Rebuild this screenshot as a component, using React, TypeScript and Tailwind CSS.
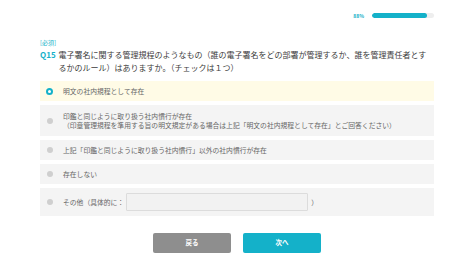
import React, { useState } from 'react';

const font = { fontFamily: '"Noto Sans CJK JP", "Noto Sans", sans-serif' };

type Option = { id: number; lines: string[]; other?: boolean };

const options: Option[] = [
  { id: 1, lines: ['明文の社内規程として存在'] },
  {
    id: 2,
    lines: [
      '印鑑と同じように取り扱う社内慣行が存在',
      '（印章管理規程を準用する旨の明文規定がある場合は上記「明文の社内規程として存在」とご回答ください）',
    ],
  },
  { id: 3, lines: ['上記「印鑑と同じように取り扱う社内慣行」以外の社内慣行が存在'] },
  { id: 4, lines: ['存在しない'] },
  { id: 5, lines: ['その他（具体的に：'], other: true },
];

function Radio({ checked }: { checked: boolean }) {
  if (checked) {
    return <span className="w-[7px] h-[7px] rounded-full border-[2px] border-[#14b1c9] bg-white shrink-0" />;
  }
  return <span className="w-[6px] h-[6px] rounded-full bg-[#cfcfcf] shrink-0 mx-[0.5px]" />;
}

export default function App() {
  const [selected, setSelected] = useState(1);

  return (
    <div className="w-[474px] h-[266px] bg-white px-[40px] pt-[12px] text-[#555]" style={font}>
      {/* progress */}
      <div className="flex items-center justify-end gap-[8px] h-[6px]">
        <span className="text-[5px] font-bold text-[#14b1c9] leading-none">88%</span>
        <div className="w-[62px] h-[5px] rounded-full bg-[#eeeeee] overflow-hidden">
          <div className="h-full w-[88%] rounded-full bg-[#14b1c9]" />
        </div>
      </div>

      <div className="mt-[21px] text-[6px] leading-[8px] text-[#14b1c9]">[必須]</div>
      <div className="mt-[1px] flex gap-[3px] text-[8px] leading-[13px] text-[#3c3c3c]">
        <span className="font-bold text-[#14b1c9] shrink-0">Q15</span>
        <p>
          電子署名に関する管理規程のようなもの（誰の電子署名をどの部署が管理するか、誰を管理責任者とするかのルール）はありますか。（チェックは１つ）
        </p>
      </div>

      <div className="mt-[7px] flex flex-col gap-[4px]">
        {options.map((o) => (
          <label
            key={o.id}
            onClick={() => setSelected(o.id)}
            className={`flex items-center pl-[6px] pr-[8px] ${
              o.other ? 'min-h-[28px]' : o.lines.length > 1 ? 'min-h-[31px]' : 'min-h-[20px]'
            } ${selected === o.id ? 'bg-[#fffbe6]' : 'bg-[#f4f4f4]'} cursor-pointer`}
          >
            <Radio checked={selected === o.id} />
            <div className="ml-[10px] text-[6.8px] leading-[9px] text-[#666] flex items-center">
              {o.other ? (
                <>
                  <span>{o.lines[0]}</span>
                  <span className="ml-[2px] w-[182px] h-[18px] border border-[#dcdcdc] bg-[#f2f2f2] rounded-[1px]" />
                  <span className="ml-[3px]">）</span>
                </>
              ) : (
                <div>
                  {o.lines.map((l) => (
                    <div key={l}>{l}</div>
                  ))}
                </div>
              )}
            </div>
          </label>
        ))}
      </div>

      <div className="mt-[17px] flex justify-center gap-[12px]">
        <button className="w-[78px] h-[20px] rounded-[2px] bg-[#8e8e8e] text-white text-[6.5px] font-bold">戻る</button>
        <button className="w-[78px] h-[20px] rounded-[2px] bg-[#14b1c9] text-white text-[6.5px] font-bold">次へ</button>
      </div>
    </div>
  );
}
